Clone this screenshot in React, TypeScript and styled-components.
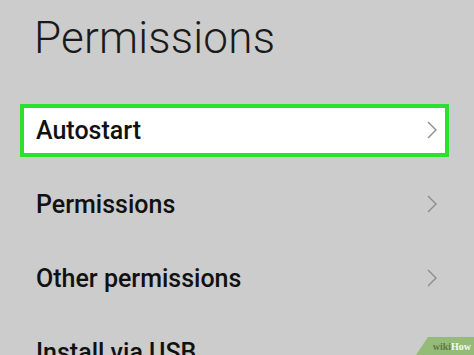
import styled, { createGlobalStyle } from 'styled-components'

const GlobalStyle = createGlobalStyle`
  html, body {
    margin: 0;
    padding: 0;
    background: #cccccc;
  }
  body {
    font-family: Roboto, "Liberation Sans", sans-serif;
    color: #111;
  }
`

const Screen = styled.div`
  position: relative;
  width: 474px;
  height: 355px;
  overflow: hidden;
  background: #cccccc;
`

const Title = styled.h1`
  margin: 0;
  padding: 16px 0 0 34px;
  font-size: 44px;
  font-weight: 300;
  line-height: 44px;
  color: #1a1a1a;
  letter-spacing: 0.2px;
`

const List = styled.div`
  display: flex;
  flex-direction: column;
  margin: 33px 25px 0 20px;
`

const Row = styled.div`
  height: 74px;
  display: flex;
  align-items: center;
  flex-shrink: 0;
`

interface IRowBoxProps {
  highlighted?: boolean
}

const RowBox = styled.div<IRowBoxProps>`
  flex: 1;
  height: 53px;
  box-sizing: border-box;
  display: flex;
  align-items: center;
  justify-content: space-between;
  padding: 0 8px 0 12px;
  border: 4px solid ${props => (props.highlighted ? '#2ee02e' : 'transparent')};
  background: ${props => (props.highlighted ? '#ffffff' : 'transparent')};
`

const Label = styled.span`
  font-size: 25px;
  font-weight: 500;
  color: #111;
`

const Chevron = () => (
  <svg width="10" height="18" viewBox="0 0 10 18">
    <polyline points="1,1 9,9 1,17" fill="none" stroke="#8c8c8c" strokeWidth="1.4" />
  </svg>
)

const Watermark = styled.div`
  position: absolute;
  right: 0;
  bottom: 0;
  width: 58px;
  height: 18px;
  background: #94bb78;
  clip-path: polygon(12px 0, 100% 0, 100% 100%, 0 100%);
  display: flex;
  align-items: center;
  justify-content: flex-end;
  padding-right: 3px;
  box-sizing: border-box;
  font-family: "Liberation Serif", serif;
  font-weight: bold;
  font-size: 10px;

  .wm-wiki {
    color: #5d7a48;
  }
  .wm-how {
    color: #f4f8ef;
  }
`

const items = ['Autostart', 'Permissions', 'Other permissions', 'Install via USB']

export default function App() {
  return (
    <Screen>
      <GlobalStyle />
      <Title>Permissions</Title>
      <List>
        {items.map((label, i) => (
          <Row key={label}>
            <RowBox highlighted={i === 0}>
              <Label>{label}</Label>
              <Chevron />
            </RowBox>
          </Row>
        ))}
      </List>
      <Watermark>
        <span className="wm-wiki">wiki</span>
        <span className="wm-how">How</span>
      </Watermark>
    </Screen>
  )
}
